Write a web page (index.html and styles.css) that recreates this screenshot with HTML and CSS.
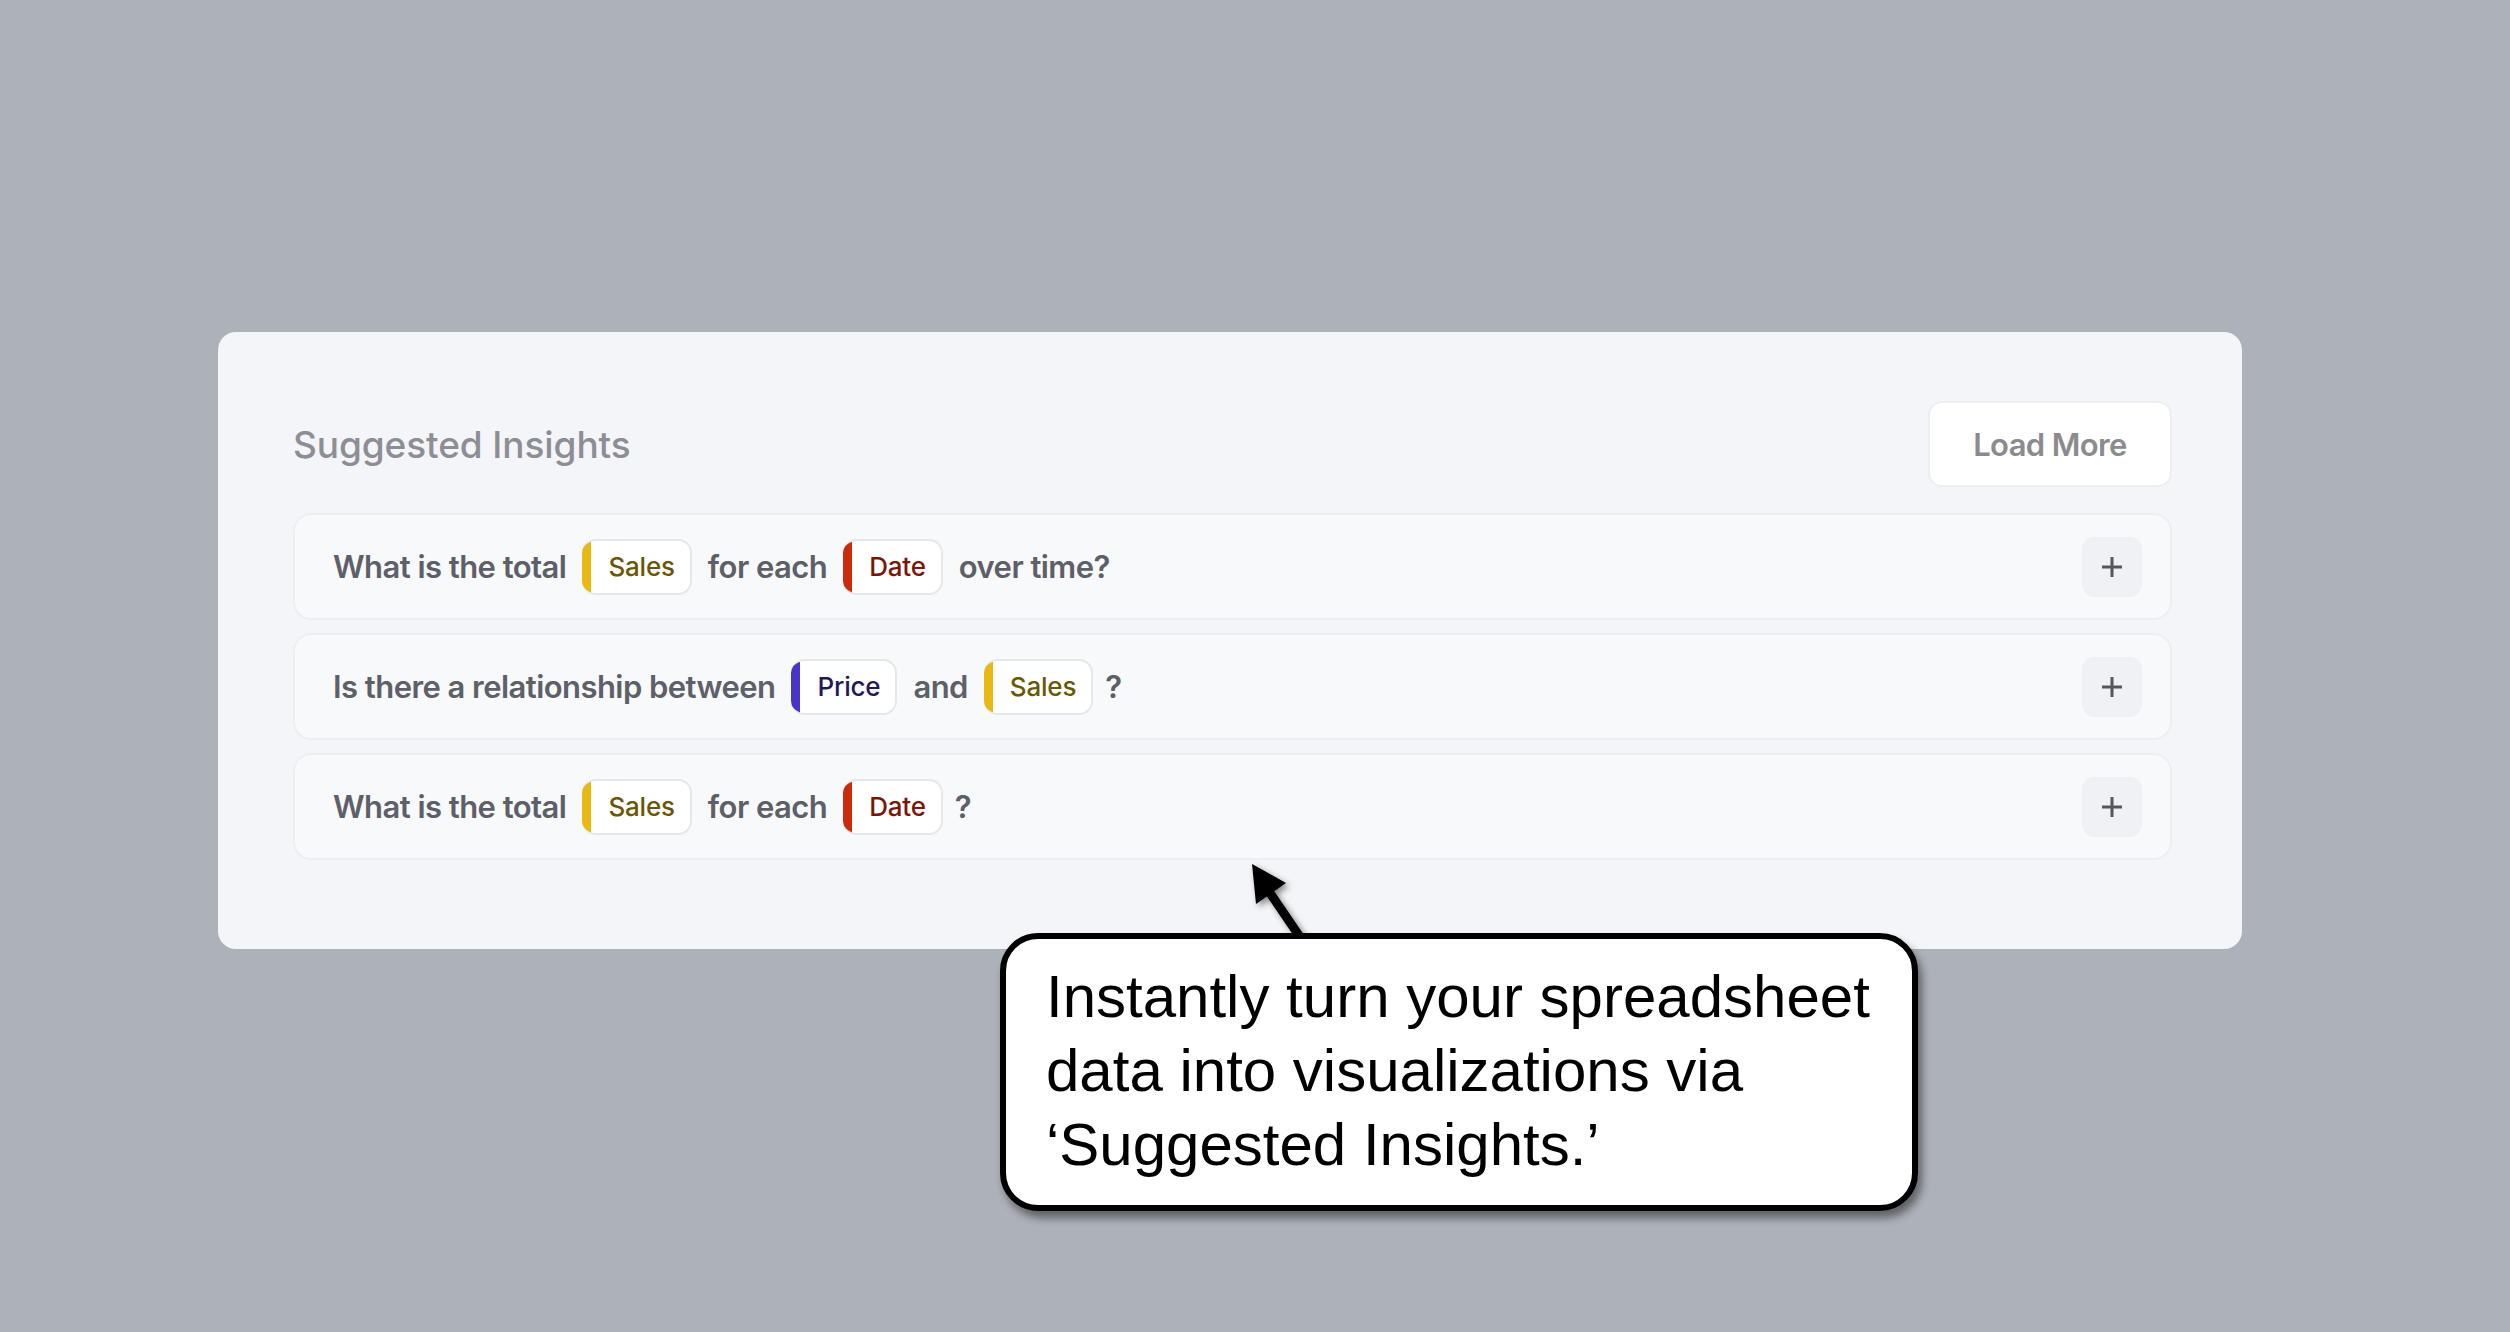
FILE: index.html
```html
<!DOCTYPE html>
<html lang="en">
<head>
<meta charset="utf-8">
<title>Suggested Insights</title>
<link rel="stylesheet" href="styles.css">
</head>
<body>
<div class="stage">
  <section class="card">
    <header class="card-head">
      <h2 class="card-title">Suggested Insights</h2>
      <button class="load-more">Load More</button>
    </header>
    <ul class="insights">
      <li class="insight">
        <div class="question">
          <span class="txt">What is the total</span>
          <span class="chip chip-sales">Sales</span>
          <span class="txt">for each</span>
          <span class="chip chip-date">Date</span>
          <span class="txt">over time?</span>
        </div>
        <button class="add" aria-label="Add"><svg viewBox="0 0 20 20" width="20" height="20"><path d="M10 0v20M0 10h20" /></svg></button>
      </li>
      <li class="insight">
        <div class="question">
          <span class="txt">Is there a relationship between</span>
          <span class="chip chip-price">Price</span>
          <span class="txt">and</span>
          <span class="chip chip-sales">Sales</span>
          <span class="txt q">?</span>
        </div>
        <button class="add" aria-label="Add"><svg viewBox="0 0 20 20" width="20" height="20"><path d="M10 0v20M0 10h20" /></svg></button>
      </li>
      <li class="insight">
        <div class="question">
          <span class="txt">What is the total</span>
          <span class="chip chip-sales">Sales</span>
          <span class="txt">for each</span>
          <span class="chip chip-date">Date</span>
          <span class="txt q">?</span>
        </div>
        <button class="add" aria-label="Add"><svg viewBox="0 0 20 20" width="20" height="20"><path d="M10 0v20M0 10h20" /></svg></button>
      </li>
    </ul>
  </section>

  <svg class="pointer" viewBox="0 0 100 100" width="100" height="100">
    <defs>
      <filter id="sh" x="-50%" y="-50%" width="200%" height="200%">
        <feDropShadow dx="3" dy="3" stdDeviation="3" flood-color="#000" flood-opacity="0.45"/>
      </filter>
    </defs>
    <g filter="url(#sh)">
      <line x1="38" y1="40" x2="72" y2="90" stroke="#000" stroke-width="9"/>
      <polygon points="22,14 56,33 26,54" fill="#000"/>
    </g>
  </svg>

  <div class="callout">Instantly turn your spreadsheet data into visualizations via ‘Suggested Insights.’</div>
</div>
</body>
</html>
```
FILE: styles.css
```css
* { box-sizing: border-box; }

html, body {
  margin: 0;
  padding: 0;
}

body {
  background: #adb1b9;
  width: 2510px;
  height: 1332px;
  overflow: hidden;
  font-family: Inter, "Noto Sans", "Liberation Sans", sans-serif;
}

.stage {
  position: relative;
  width: 2510px;
  height: 1332px;
  padding: 332px 0 0 218px;
}

.card {
  width: 2024px;
  height: 617px;
  background: #f4f5f8;
  border-radius: 18px;
  padding: 69px 70px 0 75px;
}

.card-head {
  display: flex;
  align-items: center;
  justify-content: space-between;
  height: 86px;
  margin-bottom: 26px;
}

.card-title {
  margin: 0;
  font-size: 37px;
  font-weight: 500;
  letter-spacing: -0.1px;
  color: #8d8e94;
}

.load-more {
  width: 244px;
  height: 86px;
  border: 2px solid #eceef2;
  background: #ffffff;
  border-radius: 14px;
  font-family: inherit;
  font-size: 31px;
  font-weight: 600;
  letter-spacing: -0.6px;
  color: #8b8b8d;
  padding: 0;
}

.insights {
  list-style: none;
  margin: 0;
  padding: 0;
  display: flex;
  flex-direction: column;
  gap: 13px;
}

.insight {
  height: 107px;
  display: flex;
  align-items: center;
  justify-content: space-between;
  background: #f8f9fb;
  border: 2px solid #eceef1;
  border-radius: 18px;
  padding: 0 28px 0 38px;
}

.question {
  display: flex;
  align-items: center;
  gap: 16px;
}

.txt {
  font-size: 31px;
  font-weight: 600;
  letter-spacing: -0.55px;
  color: #5d6068;
}

.txt.q { margin-left: -4px; }

.chip {
  display: inline-flex;
  align-items: center;
  height: 56px;
  padding: 0 15px 0 26px;
  border: 2px solid #e6e7eb;
  border-left: none;
  border-radius: 14px;
  font-size: 26px;
  font-weight: 500;
  letter-spacing: -0.2px;
}

.chip-sales {
  background: linear-gradient(to right, #e8b813 0 9px, #ffffff 9px);
  color: #6a5706;
}
.chip-date {
  background: linear-gradient(to right, #cc2b0b 0 9px, #ffffff 9px);
  color: #7b1606;
}
.chip-price {
  background: linear-gradient(to right, #4a33c9 0 9px, #ffffff 9px);
  color: #23175c;
}

.add {
  width: 60px;
  height: 60px;
  border: none;
  border-radius: 12px;
  background: #f0f1f5;
  display: flex;
  align-items: center;
  justify-content: center;
  padding: 0;
}

.add svg path {
  stroke: #55575e;
  stroke-width: 3;
  fill: none;
}

.pointer {
  position: absolute;
  left: 1230px;
  top: 850px;
}

.callout {
  position: absolute;
  left: 1000px;
  top: 933px;
  width: 918px;
  height: 278px;
  background: #ffffff;
  border: 6px solid #000000;
  border-radius: 38px;
  padding: 21px 40px 0 40px;
  font-family: "Liberation Sans", Arial, sans-serif;
  font-size: 60px;
  line-height: 74px;
  color: #000000;
  box-shadow: 4px 7px 8px rgba(0, 0, 0, 0.45);
}
```
